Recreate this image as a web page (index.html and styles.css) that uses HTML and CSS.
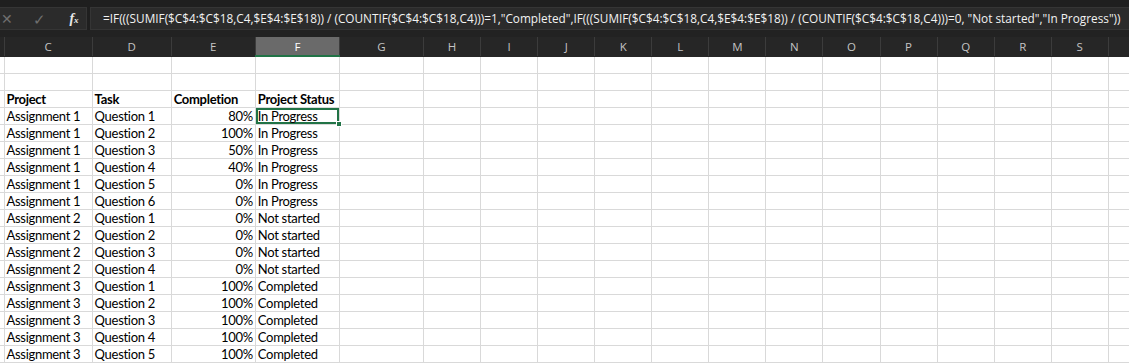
FILE: index.html
```html
<!DOCTYPE html>
<html lang="en">
<head>
    <meta charset="UTF-8">
    <meta name="viewport" content="width=device-width, initial-scale=1.0">
    <title>Project Status</title>
    <link rel="stylesheet" href="styles.css">
</head>
<body>
    <div class="topstrip"></div>
    <div class="formulabar">
        <div class="fbuttons">
            <span class="btn cancel">&#x2715;</span>
            <span class="btn ok">&#x2713;</span>
            <span class="btn fx"><i>f</i><small>x</small></span>
        </div>
        <div class="finput">=IF(((SUMIF($C$4:$C$18,C4,$E$4:$E$18)) / (COUNTIF($C$4:$C$18,C4)))=1,"Completed",IF(((SUMIF($C$4:$C$18,C4,$E$4:$E$18)) / (COUNTIF($C$4:$C$18,C4)))=0, "Not started","In Progress"))</div>
    </div>
    <div class="gap"></div>
    <table class="sheet">
        <colgroup>
            <col class="cb"><col class="cc"><col class="cd"><col class="ce"><col class="cf"><col class="cg">
            <col class="cn"><col class="cn"><col class="cn"><col class="cn"><col class="cn"><col class="cn">
            <col class="cn"><col class="cn"><col class="cn"><col class="cn"><col class="cn"><col class="cn">
            <col class="ct">
        </colgroup>
        <tr class="head">
            <th></th><th>C</th><th>D</th><th>E</th><th class="active">F</th><th>G</th><th>H</th><th>I</th><th>J</th><th>K</th><th>L</th><th>M</th><th>N</th><th>O</th><th>P</th><th>Q</th><th>R</th><th>S</th><th></th>
        </tr>
        <tr><td></td><td></td><td></td><td></td><td></td><td></td><td></td><td></td><td></td><td></td><td></td><td></td><td></td><td></td><td></td><td></td><td></td><td></td><td></td></tr>
        <tr><td></td><td></td><td></td><td></td><td></td><td></td><td></td><td></td><td></td><td></td><td></td><td></td><td></td><td></td><td></td><td></td><td></td><td></td><td></td></tr>
        <tr class="labels"><td></td><td>Project</td><td>Task</td><td>Completion</td><td>Project Status</td><td></td><td></td><td></td><td></td><td></td><td></td><td></td><td></td><td></td><td></td><td></td><td></td><td></td><td></td></tr>
        <tr><td></td><td>Assignment 1</td><td>Question 1</td><td class="num">80%</td><td class="sel">In Progress</td><td></td><td></td><td></td><td></td><td></td><td></td><td></td><td></td><td></td><td></td><td></td><td></td><td></td><td></td></tr>
        <tr><td></td><td>Assignment 1</td><td>Question 2</td><td class="num">100%</td><td>In Progress</td><td></td><td></td><td></td><td></td><td></td><td></td><td></td><td></td><td></td><td></td><td></td><td></td><td></td><td></td></tr>
        <tr><td></td><td>Assignment 1</td><td>Question 3</td><td class="num">50%</td><td>In Progress</td><td></td><td></td><td></td><td></td><td></td><td></td><td></td><td></td><td></td><td></td><td></td><td></td><td></td><td></td></tr>
        <tr><td></td><td>Assignment 1</td><td>Question 4</td><td class="num">40%</td><td>In Progress</td><td></td><td></td><td></td><td></td><td></td><td></td><td></td><td></td><td></td><td></td><td></td><td></td><td></td><td></td></tr>
        <tr><td></td><td>Assignment 1</td><td>Question 5</td><td class="num">0%</td><td>In Progress</td><td></td><td></td><td></td><td></td><td></td><td></td><td></td><td></td><td></td><td></td><td></td><td></td><td></td><td></td></tr>
        <tr><td></td><td>Assignment 1</td><td>Question 6</td><td class="num">0%</td><td>In Progress</td><td></td><td></td><td></td><td></td><td></td><td></td><td></td><td></td><td></td><td></td><td></td><td></td><td></td><td></td></tr>
        <tr><td></td><td>Assignment 2</td><td>Question 1</td><td class="num">0%</td><td>Not started</td><td></td><td></td><td></td><td></td><td></td><td></td><td></td><td></td><td></td><td></td><td></td><td></td><td></td><td></td></tr>
        <tr><td></td><td>Assignment 2</td><td>Question 2</td><td class="num">0%</td><td>Not started</td><td></td><td></td><td></td><td></td><td></td><td></td><td></td><td></td><td></td><td></td><td></td><td></td><td></td><td></td></tr>
        <tr><td></td><td>Assignment 2</td><td>Question 3</td><td class="num">0%</td><td>Not started</td><td></td><td></td><td></td><td></td><td></td><td></td><td></td><td></td><td></td><td></td><td></td><td></td><td></td><td></td></tr>
        <tr><td></td><td>Assignment 2</td><td>Question 4</td><td class="num">0%</td><td>Not started</td><td></td><td></td><td></td><td></td><td></td><td></td><td></td><td></td><td></td><td></td><td></td><td></td><td></td><td></td></tr>
        <tr><td></td><td>Assignment 3</td><td>Question 1</td><td class="num">100%</td><td>Completed</td><td></td><td></td><td></td><td></td><td></td><td></td><td></td><td></td><td></td><td></td><td></td><td></td><td></td><td></td></tr>
        <tr><td></td><td>Assignment 3</td><td>Question 2</td><td class="num">100%</td><td>Completed</td><td></td><td></td><td></td><td></td><td></td><td></td><td></td><td></td><td></td><td></td><td></td><td></td><td></td><td></td></tr>
        <tr><td></td><td>Assignment 3</td><td>Question 3</td><td class="num">100%</td><td>Completed</td><td></td><td></td><td></td><td></td><td></td><td></td><td></td><td></td><td></td><td></td><td></td><td></td><td></td><td></td></tr>
        <tr><td></td><td>Assignment 3</td><td>Question 4</td><td class="num">100%</td><td>Completed</td><td></td><td></td><td></td><td></td><td></td><td></td><td></td><td></td><td></td><td></td><td></td><td></td><td></td><td></td></tr>
        <tr><td></td><td>Assignment 3</td><td>Question 5</td><td class="num">100%</td><td>Completed</td><td></td><td></td><td></td><td></td><td></td><td></td><td></td><td></td><td></td><td></td><td></td><td></td><td></td><td></td></tr>
    </table>
</body>
</html>
```
FILE: styles.css
```css
html, body { margin: 0; padding: 0; background: #fff; overflow: hidden; }
body { width: 1129px; height: 364px; font-family: "Open Sans", sans-serif; }

.topstrip { height: 7px; background: #1f1f1f; }
.formulabar { display: flex; gap: 3px; height: 23px; background: #1f1f1f; }
.fbuttons { width: 87px; display: flex; align-items: center; background: #2b2b2b; box-sizing: border-box; border: 1px solid #353535; border-left: none; }
.btn { display: block; text-align: center; color: #6f6f6f; }
.cancel { width: 14px; font-size: 14px; }
.ok { width: 50px; font-size: 15px; }
.fx { width: 20px; color: #e8e8e8; font-family: "Liberation Serif", serif; font-size: 14px; font-weight: bold; }
.fx small { font-size: 9px; font-style: italic; }
.finput { flex: 1; background: #2b2b2b; border: 1px solid #353535; border-right: none; color: #f2f2f2; font-size: 11.8px; line-height: 21px; padding-left: 12px; white-space: nowrap; overflow: hidden; }
.gap { height: 7px; background: #222; }

.sheet { border-collapse: collapse; table-layout: fixed; width: 1149px; font-family: Lato, "Liberation Sans", sans-serif; font-size: 13px; letter-spacing: -0.3px; color: #000; }
.cb { width: 4px; }
.cc { width: 88px; }
.cd { width: 79px; }
.ce { width: 84px; }
.cf { width: 84px; }
.cg { width: 84px; }
.cn { width: 57px; }
.ct { width: 40px; }

.head th { height: 18px; padding: 0; background: #262626; color: #c4c4c4; font-family: "Open Sans", sans-serif; font-weight: normal; font-size: 11.5px; letter-spacing: 0; border-left: 1px solid #3c3c3c; border-bottom: 1px solid #262626; }
.head th:first-child { border-left: none; }
.head th.active { background: #6a6a6a; color: #fff; border-bottom: 2px solid #217346; }

td { height: 16px; padding: 0 2px; border: 1px solid #d9d9d9; border-top: none; white-space: nowrap; overflow: hidden; line-height: 16px; }
td:first-child { border-left: none; }
.labels td { font-weight: bold; }
.num { text-align: right; }
.sel { position: relative; overflow: visible; box-shadow: inset 0 0 0 2px #217346; }
.sel::after { content: ""; position: absolute; right: -3px; bottom: -3px; width: 4px; height: 4px; background: #217346; border: 1px solid #fff; }
```
